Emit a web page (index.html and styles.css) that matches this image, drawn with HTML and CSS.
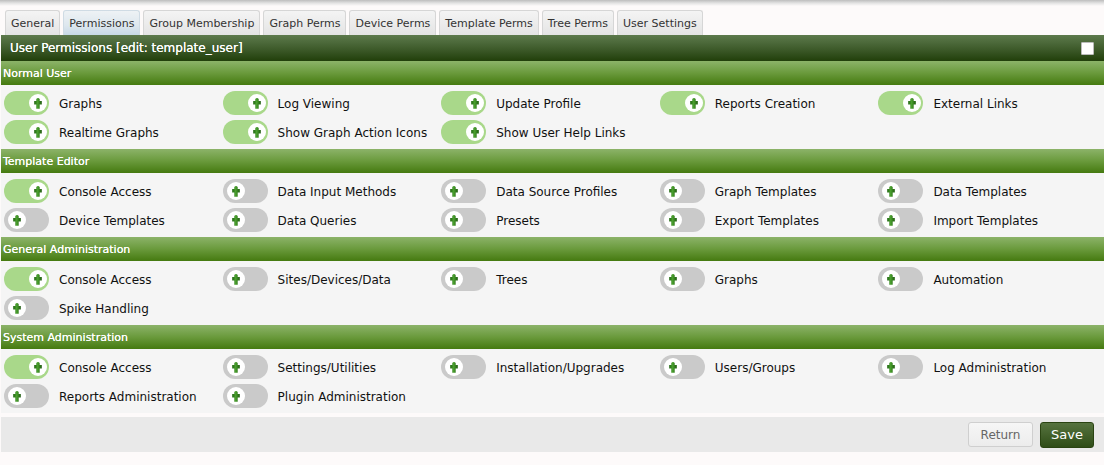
FILE: index.html
```html
<!DOCTYPE html>
<html>
<head>
<meta charset="utf-8">
<link rel="stylesheet" href="styles.css">
</head>
<body>
<div class="topbar"></div>
<div class="tabs">
  <span class="tab">General</span>
  <span class="tab selected">Permissions</span>
  <span class="tab">Group Membership</span>
  <span class="tab">Graph Perms</span>
  <span class="tab">Device Perms</span>
  <span class="tab">Template Perms</span>
  <span class="tab">Tree Perms</span>
  <span class="tab">User Settings</span>
</div>
<div class="panel">
  <div class="panel-head"><span>User Permissions [edit: template_user]</span><input type="checkbox" class="chk"></div>

  <div class="section-head">Normal User</div>
  <div class="grid">
    <div class="item"><span class="toggle on"><span class="knob"><svg viewBox="0 0 8 12" width="8" height="12"><use href="#cactus"/></svg></span></span><span class="label">Graphs</span></div>
    <div class="item"><span class="toggle on"><span class="knob"><svg viewBox="0 0 8 12" width="8" height="12"><use href="#cactus"/></svg></span></span><span class="label">Log Viewing</span></div>
    <div class="item"><span class="toggle on"><span class="knob"><svg viewBox="0 0 8 12" width="8" height="12"><use href="#cactus"/></svg></span></span><span class="label">Update Profile</span></div>
    <div class="item"><span class="toggle on"><span class="knob"><svg viewBox="0 0 8 12" width="8" height="12"><use href="#cactus"/></svg></span></span><span class="label">Reports Creation</span></div>
    <div class="item"><span class="toggle on"><span class="knob"><svg viewBox="0 0 8 12" width="8" height="12"><use href="#cactus"/></svg></span></span><span class="label">External Links</span></div>
    <div class="item"><span class="toggle on"><span class="knob"><svg viewBox="0 0 8 12" width="8" height="12"><use href="#cactus"/></svg></span></span><span class="label">Realtime Graphs</span></div>
    <div class="item"><span class="toggle on"><span class="knob"><svg viewBox="0 0 8 12" width="8" height="12"><use href="#cactus"/></svg></span></span><span class="label">Show Graph Action Icons</span></div>
    <div class="item"><span class="toggle on"><span class="knob"><svg viewBox="0 0 8 12" width="8" height="12"><use href="#cactus"/></svg></span></span><span class="label">Show User Help Links</span></div>
  </div>

  <div class="section-head">Template Editor</div>
  <div class="grid">
    <div class="item"><span class="toggle on"><span class="knob"><svg viewBox="0 0 8 12" width="8" height="12"><use href="#cactus"/></svg></span></span><span class="label">Console Access</span></div>
    <div class="item"><span class="toggle"><span class="knob"><svg viewBox="0 0 8 12" width="8" height="12"><use href="#cactus"/></svg></span></span><span class="label">Data Input Methods</span></div>
    <div class="item"><span class="toggle"><span class="knob"><svg viewBox="0 0 8 12" width="8" height="12"><use href="#cactus"/></svg></span></span><span class="label">Data Source Profiles</span></div>
    <div class="item"><span class="toggle"><span class="knob"><svg viewBox="0 0 8 12" width="8" height="12"><use href="#cactus"/></svg></span></span><span class="label">Graph Templates</span></div>
    <div class="item"><span class="toggle"><span class="knob"><svg viewBox="0 0 8 12" width="8" height="12"><use href="#cactus"/></svg></span></span><span class="label">Data Templates</span></div>
    <div class="item"><span class="toggle"><span class="knob"><svg viewBox="0 0 8 12" width="8" height="12"><use href="#cactus"/></svg></span></span><span class="label">Device Templates</span></div>
    <div class="item"><span class="toggle"><span class="knob"><svg viewBox="0 0 8 12" width="8" height="12"><use href="#cactus"/></svg></span></span><span class="label">Data Queries</span></div>
    <div class="item"><span class="toggle"><span class="knob"><svg viewBox="0 0 8 12" width="8" height="12"><use href="#cactus"/></svg></span></span><span class="label">Presets</span></div>
    <div class="item"><span class="toggle"><span class="knob"><svg viewBox="0 0 8 12" width="8" height="12"><use href="#cactus"/></svg></span></span><span class="label">Export Templates</span></div>
    <div class="item"><span class="toggle"><span class="knob"><svg viewBox="0 0 8 12" width="8" height="12"><use href="#cactus"/></svg></span></span><span class="label">Import Templates</span></div>
  </div>

  <div class="section-head">General Administration</div>
  <div class="grid">
    <div class="item"><span class="toggle on"><span class="knob"><svg viewBox="0 0 8 12" width="8" height="12"><use href="#cactus"/></svg></span></span><span class="label">Console Access</span></div>
    <div class="item"><span class="toggle"><span class="knob"><svg viewBox="0 0 8 12" width="8" height="12"><use href="#cactus"/></svg></span></span><span class="label">Sites/Devices/Data</span></div>
    <div class="item"><span class="toggle"><span class="knob"><svg viewBox="0 0 8 12" width="8" height="12"><use href="#cactus"/></svg></span></span><span class="label">Trees</span></div>
    <div class="item"><span class="toggle"><span class="knob"><svg viewBox="0 0 8 12" width="8" height="12"><use href="#cactus"/></svg></span></span><span class="label">Graphs</span></div>
    <div class="item"><span class="toggle"><span class="knob"><svg viewBox="0 0 8 12" width="8" height="12"><use href="#cactus"/></svg></span></span><span class="label">Automation</span></div>
    <div class="item"><span class="toggle"><span class="knob"><svg viewBox="0 0 8 12" width="8" height="12"><use href="#cactus"/></svg></span></span><span class="label">Spike Handling</span></div>
  </div>

  <div class="section-head">System Administration</div>
  <div class="grid">
    <div class="item"><span class="toggle on"><span class="knob"><svg viewBox="0 0 8 12" width="8" height="12"><use href="#cactus"/></svg></span></span><span class="label">Console Access</span></div>
    <div class="item"><span class="toggle"><span class="knob"><svg viewBox="0 0 8 12" width="8" height="12"><use href="#cactus"/></svg></span></span><span class="label">Settings/Utilities</span></div>
    <div class="item"><span class="toggle"><span class="knob"><svg viewBox="0 0 8 12" width="8" height="12"><use href="#cactus"/></svg></span></span><span class="label">Installation/Upgrades</span></div>
    <div class="item"><span class="toggle"><span class="knob"><svg viewBox="0 0 8 12" width="8" height="12"><use href="#cactus"/></svg></span></span><span class="label">Users/Groups</span></div>
    <div class="item"><span class="toggle"><span class="knob"><svg viewBox="0 0 8 12" width="8" height="12"><use href="#cactus"/></svg></span></span><span class="label">Log Administration</span></div>
    <div class="item"><span class="toggle"><span class="knob"><svg viewBox="0 0 8 12" width="8" height="12"><use href="#cactus"/></svg></span></span><span class="label">Reports Administration</span></div>
    <div class="item"><span class="toggle"><span class="knob"><svg viewBox="0 0 8 12" width="8" height="12"><use href="#cactus"/></svg></span></span><span class="label">Plugin Administration</span></div>
  </div>
</div>
<div class="footer">
  <button class="btn return">Return</button>
  <button class="btn save">Save</button>
</div>

<svg width="0" height="0" class="defs">
  <defs>
    <linearGradient id="cg" x1="0" y1="0" x2="1" y2="0">
      <stop offset="0" stop-color="#1f6410"/>
      <stop offset="0.45" stop-color="#4aa02e"/>
      <stop offset="1" stop-color="#1d5a0e"/>
    </linearGradient>
    <g id="cactus">
      <path d="M2.3 2 Q4 -0.2 5.7 2 L5.7 4 L7.8 4 L7.8 7.4 L5.7 7.4 L5.7 11.8 L2.3 11.8 L2.3 7.4 L0.2 7.4 L0.2 4 L2.3 4 Z" fill="url(#cg)"/>
    </g>
  </defs>
</svg>
</body>
</html>
```

FILE: styles.css
```css
html, body {
  margin: 0;
  padding: 0;
  background: #fdfafa;
  font-family: "DejaVu Sans", Verdana, sans-serif;
}

.defs {
  display: block;
  width: 0;
  height: 0;
  overflow: hidden;
}

.topbar {
  height: 6px;
  background: linear-gradient(#bdbdbd, #e2e2e2 50%, #fdfafa);
}

.tabs {
  display: flex;
  gap: 3px;
  margin-top: 4px;
  padding-left: 5px;
  height: 25px;
}

.tab {
  box-sizing: border-box;
  height: 25px;
  padding: 1px 5px 0;
  display: flex;
  align-items: center;
  font-size: 11px;
  color: #333;
  background: linear-gradient(#f4f4f4, #e4e4e4);
  border: 1px solid #d6d6d6;
  border-bottom: none;
  border-radius: 3px 3px 0 0;
}

.tab.selected {
  background: linear-gradient(#eef2f5, #dde7ee 60%, #c7d9e6);
  border-color: #cfdbe4;
}

.panel {
  margin-left: 1px;
}

.panel-head {
  height: 26px;
  box-sizing: border-box;
  padding: 0 10px 0 9px;
  display: flex;
  align-items: center;
  justify-content: space-between;
  background: linear-gradient(#5d7a4c, #3d5a2a 55%, #213f0a);
  color: #fff;
  font-size: 12px;
  text-shadow: 0 0 0.6px #fff;
}

.chk {
  appearance: none;
  -webkit-appearance: none;
  margin: 0;
  width: 13px;
  height: 13px;
  background: #fff;
  border: 1px solid #bbb;
  border-radius: 1px;
  box-sizing: border-box;
}

.section-head {
  height: 24px;
  box-sizing: border-box;
  padding-left: 2px;
  display: flex;
  align-items: center;
  background: linear-gradient(#8cb369, #6a9a3c 50%, #457a10);
  color: #fff;
  font-size: 11px;
  text-shadow: 0 0 0.6px #fff;
}

.grid {
  background: #f5f5f5;
  display: grid;
  grid-template-columns: repeat(5, 218.6px);
  row-gap: 5px;
  padding: 6px 0 5px 3px;
}

.item {
  display: flex;
  align-items: center;
  gap: 10px;
  height: 24px;
}

.toggle {
  box-sizing: border-box;
  width: 45px;
  height: 24px;
  border-radius: 12px;
  background: #cacaca;
  display: flex;
  align-items: center;
  justify-content: flex-start;
  padding: 0 4px;
  flex: none;
}

.toggle.on {
  background: #a9d88a;
  justify-content: flex-end;
  padding: 0 2px;
}

.knob {
  width: 18px;
  height: 18px;
  border-radius: 50%;
  background: #fff;
  display: flex;
  align-items: center;
  justify-content: center;
}

.knob svg {
  display: block;
}

.label {
  font-size: 12px;
  color: #111;
  white-space: nowrap;
  padding-top: 2px;
}

.footer {
  margin: 4px 0 0 1px;
  height: 35px;
  background: #e9e9e9;
  display: flex;
  align-items: center;
  justify-content: flex-end;
  gap: 7px;
  padding-right: 10px;
}

.btn {
  height: 25px;
  box-sizing: border-box;
  border-radius: 3px;
  font-family: "DejaVu Sans", Verdana, sans-serif;
  font-size: 12px;
  padding: 0;
}

.btn.return {
  width: 65px;
  background: linear-gradient(#f6f6f6, #ececec);
  border: 1px solid #cfcfcf;
  color: #666;
}

.btn.save {
  width: 54px;
  height: 26px;
  background: linear-gradient(#56733f, #2f4d17);
  border: 1px solid #2a4412;
  color: #fff;
  font-size: 13px;
}
```
